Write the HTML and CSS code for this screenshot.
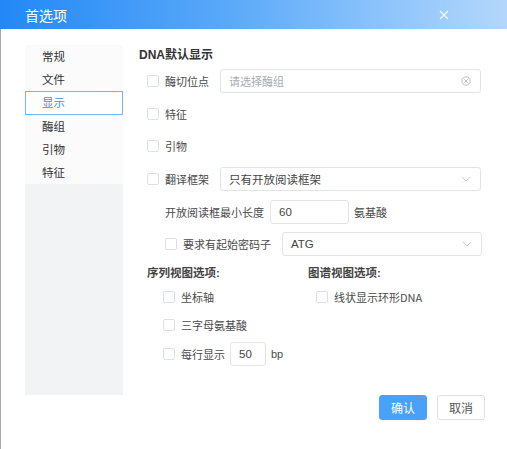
FILE: index.html
```html
<!DOCTYPE html>
<html lang="zh">
<head>
<meta charset="utf-8">
<title>首选项</title>
<link rel="stylesheet" href="styles.css">
</head>
<body>
<div class="dialog">
  <header class="titlebar">
    <span class="title">首选项</span>
    <svg class="close" width="10" height="10" viewBox="0 0 10 10"><path d="M1 1L9 9M9 1L1 9" stroke="#fff" stroke-width="1.2" fill="none"/></svg>
  </header>
  <div class="body">
    <nav class="sidebar">
      <ul class="menu">
        <li class="item">常规</li>
        <li class="item">文件</li>
        <li class="item active">显示</li>
        <li class="item">酶组</li>
        <li class="item">引物</li>
        <li class="item">特征</li>
      </ul>
    </nav>
    <main class="content">
      <h2 class="heading">DNA默认显示</h2>
      <div class="rows">
        <div class="row">
          <span class="cb"></span><span class="label">酶切位点</span>
          <div class="select wide"><span class="placeholder">请选择酶组</span>
            <svg class="clear" width="10" height="10" viewBox="0 0 10 10"><circle cx="5" cy="5" r="4.2" stroke="#b8b8b8" stroke-width="0.9" fill="none"/><path d="M3.4 3.4L6.6 6.6M6.6 3.4L3.4 6.6" stroke="#b8b8b8" stroke-width="0.9"/></svg>
          </div>
        </div>
        <div class="row"><span class="cb"></span><span class="label">特征</span></div>
        <div class="row"><span class="cb"></span><span class="label">引物</span></div>
        <div class="row">
          <span class="cb"></span><span class="label">翻译框架</span>
          <div class="select wide"><span class="value">只有开放阅读框架</span>
            <svg class="chev" width="10" height="6" viewBox="0 0 10 6"><path d="M1 1L5 5L9 1" stroke="#c0c4cc" stroke-width="0.9" fill="none"/></svg>
          </div>
        </div>
        <div class="row indent">
          <span class="text">开放阅读框最小长度</span>
          <div class="input num80"><span class="value">60</span></div>
          <span class="unit">氨基酸</span>
        </div>
        <div class="row indent">
          <span class="cb"></span><span class="label">要求有起始密码子</span>
          <div class="select flex"><span class="value">ATG</span>
            <svg class="chev" width="10" height="6" viewBox="0 0 10 6"><path d="M1 1L5 5L9 1" stroke="#c0c4cc" stroke-width="0.9" fill="none"/></svg>
          </div>
        </div>
      </div>
      <div class="sections">
        <section class="col left">
          <h3 class="sub">序列视图选项:</h3>
          <div class="subrows">
            <div class="row"><span class="cb"></span><span class="label">坐标轴</span></div>
            <div class="row"><span class="cb"></span><span class="label">三字母氨基酸</span></div>
            <div class="row"><span class="cb"></span><span class="label tight">每行显示</span>
              <div class="input num36"><span class="value">50</span></div><span class="unit">bp</span></div>
          </div>
        </section>
        <section class="col right">
          <h3 class="sub">图谱视图选项:</h3>
          <div class="subrows">
            <div class="row"><span class="cb"></span><span class="label">线状显示环形DNA</span></div>
          </div>
        </section>
      </div>
    </main>
  </div>
  <footer class="footer">
    <button class="btn primary">确认</button>
    <button class="btn">取消</button>
  </footer>
</div>
</body>
</html>
```

FILE: styles.css
```css
* { box-sizing: border-box; }
html, body { margin: 0; padding: 0; background: #fff; }
body {
  font-family: "Liberation Sans", "Noto Sans CJK SC", sans-serif;
  font-size: 11px;
  color: #4a4a4a;
  width: 507px;
  height: 449px;
  overflow: hidden;
}
.dialog { width: 507px; height: 449px; display: flex; flex-direction: column; border-left: 1px solid #a8a8a8; }
.titlebar {
  height: 29px;
  margin-left: -1px;
  background: linear-gradient(to right, #2288f6 0%, #5aa9f9 45%, #8cc3fb 75%, #b3d7fc 100%);
  display: flex;
  align-items: center;
  justify-content: space-between;
  padding: 0 54px 0 25px;
  padding-right: 58px;
}
.title { color: #fff; font-size: 14px; font-family: "Noto Sans CJK SC", sans-serif; line-height: 1; }
.close { opacity: 0.85; }
.body { display: flex; flex: 1; }
.sidebar {
  margin: 16px 0 0 24px;
  width: 98px;
  height: 350px;
  background: #f2f3f4;
}
.menu { list-style: none; margin: 0; padding: 0; background: #fbfbfb; }
.item {
  height: 23.2px;
  line-height: 23.2px;
  padding-left: 17px;
  color: #333;
  font-family: "Noto Sans CJK SC", sans-serif;
  font-size: 11.5px;
}
.item.active { border: 1px solid #76b4f6; background: #fff; color: #3d8ff0; padding-left: 16px; line-height: 21.2px; }
.content { margin: 16px 0 0 16px; width: 344px; }
.heading {
  margin: 0;
  height: 20px;
  line-height: 20px;
  font-size: 12px;
  font-weight: bold;
  color: #333;
}
.rows { margin-top: 4px; padding-left: 8px; display: flex; flex-direction: column; gap: 8.7px; }
.row { height: 24px; display: flex; align-items: center; }
.row.indent { padding-left: 18px; }
.cb {
  width: 12px; height: 12px;
  border: 1px solid #dcdfe6;
  border-radius: 2px;
  background: #fff;
  flex: none;
}
.label { margin-left: 6px; white-space: nowrap; font-family: "Noto Sans CJK SC", sans-serif; }
.text { white-space: nowrap; font-family: "Noto Sans CJK SC", sans-serif; }
.select, .input {
  height: 24px;
  border: 1px solid #e0e3e8;
  border-radius: 3px;
  background: #fff;
  display: flex;
  align-items: center;
  padding-left: 8px;
  padding-right: 9px;
}
.select { justify-content: space-between; }
.select.wide { margin-left: 11px; width: 261px; }
.select.flex { margin-left: 11px; width: 200px; }
.placeholder { color: #a8abb2; font-family: "Noto Sans CJK SC", sans-serif; }
.value { color: #444; font-size: 11.5px; font-family: "Liberation Sans", "Noto Sans CJK SC", sans-serif; }
.input.num80 { margin-left: 6px; width: 79px; }
.input.num36 { margin-left: 5px; width: 36px; }
.unit { margin-left: 5px; font-family: "Liberation Sans", "Noto Sans CJK SC", sans-serif; }
.sections { display: flex; margin-top: 7.2px; padding-left: 8px; }
.col.left { width: 161px; }
.sub {
  margin: 0;
  height: 18px;
  line-height: 18px;
  font-size: 11.5px;
  font-weight: bold;
  color: #444;
}
.subrows { margin-top: 3px; display: flex; flex-direction: column; gap: 4.6px; padding-left: 16px; }
.col.right .subrows { padding-left: 8px; }
.footer {
  height: 54px;
  display: flex;
  justify-content: flex-end;
  align-items: flex-start;
  gap: 10px;
  padding-right: 22px;
}
.btn {
  width: 48px;
  height: 25px;
  border: 1px solid #dcdfe6;
  border-radius: 3px;
  background: #fff;
  color: #555;
  font-size: 12px;
  font-family: "Noto Sans CJK SC", sans-serif;
  padding: 0;
}
.btn.primary { background: #48a1fa; border-color: #48a1fa; color: #fff; }
```
